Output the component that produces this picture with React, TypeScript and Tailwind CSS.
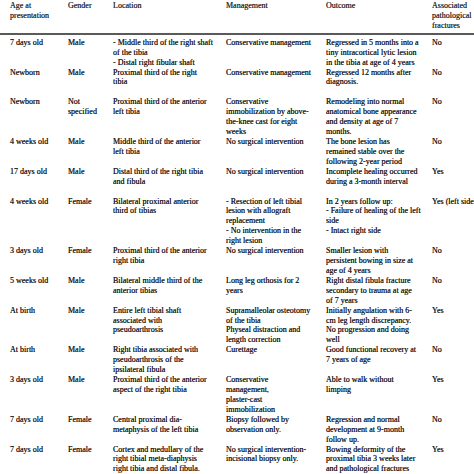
import React from "react";

type Row = {
  age: string[];
  gender: string[];
  loc: string[];
  mgmt: string[];
  out: string[];
  frac: string[];
};

const rows: Row[] = [
  {
    age: ["7 days old"],
    gender: ["Male"],
    loc: ["- Middle third of the right shaft", "of the tibia", "- Distal right fibular shaft"],
    mgmt: ["Conservative management"],
    out: ["Regressed in 5 months into a", "tiny intracortical lytic lesion", "in the tibia at age of 4 years"],
    frac: ["No"],
  },
  {
    age: ["Newborn"],
    gender: ["Male"],
    loc: ["Proximal third of the right", "tibia"],
    mgmt: ["Conservative management"],
    out: ["Regressed 12 months after", "diagnosis."],
    frac: ["No"],
  },
  {
    age: ["Newborn"],
    gender: ["Not", "specified"],
    loc: ["Proximal third of the anterior", "left tibia"],
    mgmt: ["Conservative", "immobilization by above-", "the-knee cast for eight", "weeks"],
    out: ["Remodeling into normal", "anatomical bone appearance", "and density at age of 7", "months."],
    frac: ["No"],
  },
  {
    age: ["4 weeks old"],
    gender: ["Male"],
    loc: ["Middle third of the anterior", "left tibia"],
    mgmt: ["No surgical intervention"],
    out: ["The bone lesion has", "remained stable over the", "following 2-year period"],
    frac: ["No"],
  },
  {
    age: ["17 days old"],
    gender: ["Male"],
    loc: ["Distal third of the right tibia", "and fibula"],
    mgmt: ["No surgical intervention"],
    out: ["Incomplete healing occurred", "during a 3-month interval"],
    frac: ["Yes"],
  },
  {
    age: ["4 weeks old"],
    gender: ["Female"],
    loc: ["Bilateral proximal anterior", "third of tibias"],
    mgmt: ["- Resection of left tibial", "lesion with allograft", "replacement", "- No intervention in the", "right lesion"],
    out: ["In 2 years follow up:", "- Failure of healing of the left", "side", "- Intact right side"],
    frac: ["Yes (left side)"],
  },
  {
    age: ["3 days old"],
    gender: ["Female"],
    loc: ["Proximal third of the anterior", "right tibia"],
    mgmt: ["No surgical intervention"],
    out: ["Smaller lesion with", "persistent bowing in size at", "age of 4 years"],
    frac: ["No"],
  },
  {
    age: ["5 weeks old"],
    gender: ["Male"],
    loc: ["Bilateral middle third of the", "anterior tibias"],
    mgmt: ["Long leg orthosis for 2", "years"],
    out: ["Right distal fibula fracture", "secondary to trauma at age", "of 7 years"],
    frac: ["No"],
  },
  {
    age: ["At birth"],
    gender: ["Male"],
    loc: ["Entire left tibial shaft", "associated with", "pseudoarthrosis"],
    mgmt: ["Supramalleolar osteotomy", "of the tibia", "Physeal distraction and", "length correction"],
    out: ["Initially angulation with 6-", "cm leg length discrepancy.", "No progression and doing", "well"],
    frac: ["Yes"],
  },
  {
    age: ["At birth"],
    gender: ["Male"],
    loc: ["Right tibia associated with", "pseudoarthrosis of the", "ipsilateral fibula"],
    mgmt: ["Curettage"],
    out: ["Good functional recovery at", "7 years of age"],
    frac: ["No"],
  },
  {
    age: ["3 days old"],
    gender: ["Male"],
    loc: ["Proximal third of the anterior", "aspect of the right tibia"],
    mgmt: ["Conservative", "management,", "plaster-cast", "immobilization"],
    out: ["Able to walk without", "limping"],
    frac: ["Yes"],
  },
  {
    age: ["7 days old"],
    gender: ["Female"],
    loc: ["Central proximal dia-", "metaphysis of the left tibia"],
    mgmt: ["Biopsy followed by", "observation only."],
    out: ["Regression and normal", "development at 9-month", "follow up."],
    frac: ["No"],
  },
  {
    age: ["7 days old"],
    gender: ["Female"],
    loc: ["Cortex and medullary of the", "right tibial meta-diaphysis", "right tibia and distal fibula."],
    mgmt: ["No surgical intervention-", "incisional biopsy only."],
    out: ["Bowing deformity of the", "proximal tibia 3 weeks later", "and pathological fractures"],
    frac: ["Yes"],
  },
];

function Cell({ lines }: { lines: string[] }) {
  return (
    <div className="flex flex-col whitespace-nowrap">
      {lines.map((l, i) => (
        <span key={i}>{l}</span>
      ))}
    </div>
  );
}

const grid = "grid grid-cols-[58px_45px_113px_100px_106px_110px]";

export default function App() {
  return (
    <div
      className="w-[474px] h-[474px] overflow-hidden bg-white text-[#262626] text-[8px] leading-[9.9px] pl-[10px] [text-shadow:0_0_0.35px_#262626]"
      style={{ fontFamily: '"Liberation Serif", "Times New Roman", serif' }}
    >
      <div className="w-[540px]">
        <div className={`${grid} pt-[1px] pb-[2px] text-[#3a3a3a]`}>
          <Cell lines={["Age at", "presentation"]} />
          <Cell lines={["Gender"]} />
          <Cell lines={["Location"]} />
          <Cell lines={["Management"]} />
          <Cell lines={["Outcome"]} />
          <Cell lines={["Associated", "pathological", "fractures"]} />
        </div>
        <div className="h-[2px] bg-[#5a5a5a] -ml-[10px] w-[484px] mb-[3px]" />
        {rows.map((r, i) => (
          <div key={i} className={`${grid} min-h-[29.8px]`}>
            <Cell lines={r.age} />
            <Cell lines={r.gender} />
            <Cell lines={r.loc} />
            <Cell lines={r.mgmt} />
            <Cell lines={r.out} />
            <Cell lines={r.frac} />
          </div>
        ))}
      </div>
    </div>
  );
}
